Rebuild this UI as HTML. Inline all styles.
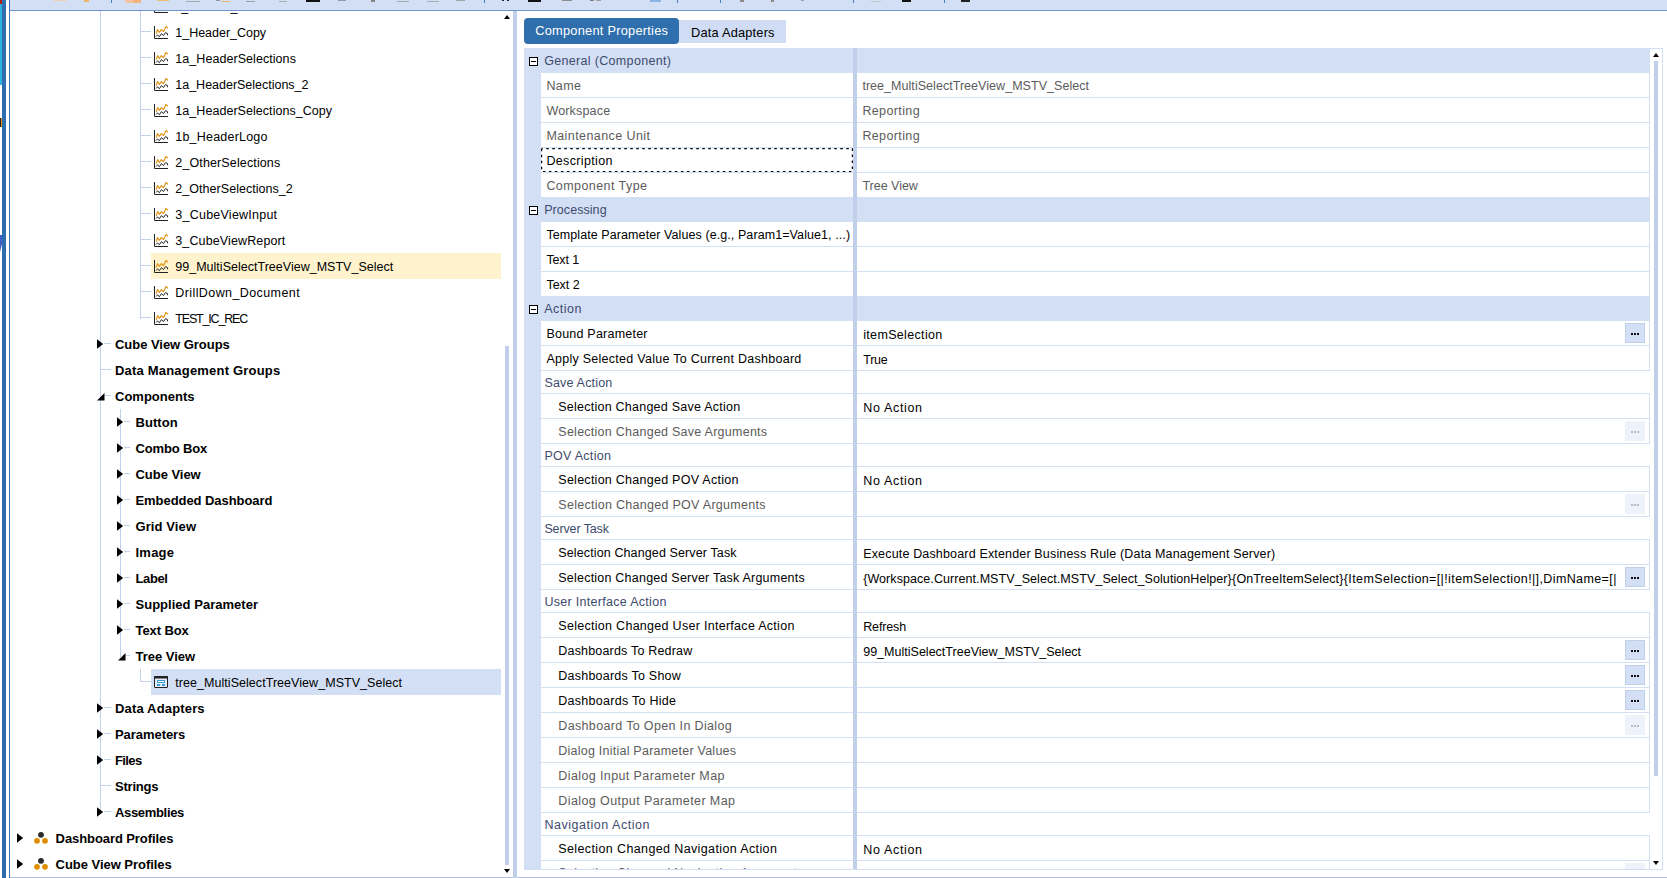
<!DOCTYPE html>
<html lang="en"><head><meta charset="utf-8"><title>Component Properties</title>
<style>
html,body{margin:0;padding:0;background:#fff;}
body{width:1667px;height:878px;overflow:hidden;position:relative;font-family:"Liberation Sans", sans-serif;}
div,svg,span.t{position:absolute;}
span.t{white-space:pre;line-height:20px;height:20px;}
#grid{left:524px;top:48px;width:1139px;height:822px;overflow:hidden;}
</style></head><body>
<div style="left:0px;top:0px;width:2px;height:4px;background:#b01c14;"></div>
<div style="left:0px;top:4px;width:2px;height:81px;background:#2fb1e0;"></div>
<div style="left:2px;top:0px;width:4px;height:878px;background:#2e6dae;"></div>
<div style="left:0px;top:118px;width:1px;height:9px;background:#222;"></div>
<div style="left:1px;top:118px;width:1px;height:9px;background:#e08e0b;"></div>
<div style="left:0px;top:235px;width:2px;height:17px;background:#4060c8;clip-path:polygon(0 0,100% 0,100% 53%,0 100%);"></div>
<div style="left:9px;top:0px;width:1px;height:878px;background:#3a72b0;"></div>
<div style="left:10px;top:0px;width:1657px;height:10px;background:#d3dff5;"></div>
<div style="left:10px;top:10px;width:1657px;height:1px;background:#7094cf;"></div>
<div style="left:10px;top:877px;width:1657px;height:1px;background:#b4c1dd;"></div>
<div style="left:54px;top:0px;width:5px;height:1px;background:#ecd0a8;"></div>
<div style="left:60px;top:0px;width:6px;height:1px;background:#ecd0a8;"></div>
<div style="left:84px;top:0px;width:5px;height:1.5px;background:#f0b468;"></div>
<div style="left:111px;top:0px;width:1px;height:2.5px;background:#4a7ac0;"></div>
<div style="left:125px;top:0px;width:8px;height:2.5px;background:#f3c4a4;"></div>
<div style="left:133px;top:0px;width:8px;height:2.5px;background:#f3b47c;"></div>
<div style="left:157px;top:0px;width:12px;height:1px;background:#efbc78;"></div>
<div style="left:186px;top:1px;width:14px;height:1px;background:#a4a8b0;"></div>
<div style="left:216px;top:0px;width:4px;height:1px;background:#9098a4;"></div>
<div style="left:221px;top:1px;width:9px;height:1px;background:#ecb870;"></div>
<div style="left:246px;top:1px;width:9px;height:1px;background:#9a9ea8;"></div>
<div style="left:279px;top:1px;width:8px;height:1px;background:#a4a8b0;"></div>
<div style="left:306px;top:0px;width:14px;height:1.6px;background:#111;"></div>
<div style="left:338px;top:0px;width:8px;height:1px;background:#8e9cb4;"></div>
<div style="left:371px;top:0px;width:4px;height:1.6px;background:#858585;"></div>
<div style="left:397px;top:1px;width:12px;height:1px;background:#a4a8b0;"></div>
<div style="left:427px;top:1px;width:12px;height:1px;background:#a4a8b0;"></div>
<div style="left:456px;top:0px;width:9px;height:1px;background:#a0a4ac;"></div>
<div style="left:484px;top:0px;width:1px;height:2.5px;background:#4a7ac0;"></div>
<div style="left:502px;top:0px;width:2px;height:1px;background:#222;"></div>
<div style="left:507px;top:0px;width:2px;height:1px;background:#222;"></div>
<div style="left:528px;top:0px;width:13px;height:1.6px;background:#111;"></div>
<div style="left:562px;top:0px;width:10px;height:1px;background:#8c8c8c;"></div>
<div style="left:590px;top:0px;width:4px;height:1px;background:#808080;"></div>
<div style="left:596px;top:0px;width:5px;height:1px;background:#a0a0a0;"></div>
<div style="left:650px;top:0px;width:11px;height:1.6px;background:#8ab4e8;"></div>
<div style="left:677px;top:0px;width:1px;height:2.5px;background:#4a7ac0;"></div>
<div style="left:720px;top:0px;width:1px;height:2.5px;background:#4a7ac0;"></div>
<div style="left:740px;top:0px;width:4px;height:1.6px;background:#8c8c8c;"></div>
<div style="left:771px;top:0px;width:3px;height:1.6px;background:#8c8c8c;"></div>
<div style="left:801px;top:0px;width:3px;height:1px;background:#a0a0a0;"></div>
<div style="left:853px;top:0px;width:1px;height:2.5px;background:#4a7ac0;"></div>
<div style="left:871px;top:1px;width:10px;height:1px;background:#c4c8d0;"></div>
<div style="left:902px;top:0px;width:9px;height:1.6px;background:#111;"></div>
<div style="left:944px;top:0px;width:1px;height:2.5px;background:#4a7ac0;"></div>
<div style="left:961px;top:0px;width:9px;height:1.6px;background:#222;"></div>
<div style="left:513px;top:11px;width:4px;height:867px;background:#c0cfea;"></div>
<div style="left:504px;top:15px;width:0;height:0;border-left:3px solid transparent;border-right:3px solid transparent;border-bottom:4px solid #000"></div>
<div style="left:504px;top:869px;width:0;height:0;border-left:3px solid transparent;border-right:3px solid transparent;border-top:4px solid #000"></div>
<div style="left:505px;top:346px;width:4px;height:519px;background:#c0cfea;"></div>
<div style="left:100px;top:11px;width:1px;height:802px;background:#c3d1ec;"></div>
<div style="left:140px;top:11px;width:1px;height:308px;background:#c3d1ec;"></div>
<div style="left:120px;top:409px;width:1px;height:248px;background:#c3d1ec;"></div>
<div style="left:140px;top:669px;width:1px;height:13px;background:#c3d1ec;"></div>
<div style="left:151px;top:253px;width:350px;height:25.5px;background:#fff3cd;"></div>
<div style="left:151px;top:669px;width:350px;height:26px;background:#d3dff5;"></div>
<div style="left:141px;top:31px;width:10px;height:1px;background:#c3d1ec;"></div>
<svg style="left:154px;top:26px" width="15" height="14" viewBox="0 0 15 14"><path d="M0.5 0V12.5H14" fill="none" stroke="#222" stroke-width="1"/><path d="M2.4 7.4L3.5 3.6L5.4 6.4L7.4 3.6L9.5 5.7L12 0.4L13.6 1.8" fill="none" stroke="#e08e0b" stroke-width="1.1" stroke-linejoin="round" stroke-linecap="round"/><path d="M2.4 10.2L3.5 8.9L5.4 10.7L7.4 7.7L9.5 9.5L11.5 6.6L13.4 7.5L13.6 8.9" fill="none" stroke="#222" stroke-width="1" stroke-linejoin="round" stroke-linecap="round"/></svg>
<div style="left:141px;top:57px;width:10px;height:1px;background:#c3d1ec;"></div>
<svg style="left:154px;top:52px" width="15" height="14" viewBox="0 0 15 14"><path d="M0.5 0V12.5H14" fill="none" stroke="#222" stroke-width="1"/><path d="M2.4 7.4L3.5 3.6L5.4 6.4L7.4 3.6L9.5 5.7L12 0.4L13.6 1.8" fill="none" stroke="#e08e0b" stroke-width="1.1" stroke-linejoin="round" stroke-linecap="round"/><path d="M2.4 10.2L3.5 8.9L5.4 10.7L7.4 7.7L9.5 9.5L11.5 6.6L13.4 7.5L13.6 8.9" fill="none" stroke="#222" stroke-width="1" stroke-linejoin="round" stroke-linecap="round"/></svg>
<div style="left:141px;top:83px;width:10px;height:1px;background:#c3d1ec;"></div>
<svg style="left:154px;top:78px" width="15" height="14" viewBox="0 0 15 14"><path d="M0.5 0V12.5H14" fill="none" stroke="#222" stroke-width="1"/><path d="M2.4 7.4L3.5 3.6L5.4 6.4L7.4 3.6L9.5 5.7L12 0.4L13.6 1.8" fill="none" stroke="#e08e0b" stroke-width="1.1" stroke-linejoin="round" stroke-linecap="round"/><path d="M2.4 10.2L3.5 8.9L5.4 10.7L7.4 7.7L9.5 9.5L11.5 6.6L13.4 7.5L13.6 8.9" fill="none" stroke="#222" stroke-width="1" stroke-linejoin="round" stroke-linecap="round"/></svg>
<div style="left:141px;top:109px;width:10px;height:1px;background:#c3d1ec;"></div>
<svg style="left:154px;top:104px" width="15" height="14" viewBox="0 0 15 14"><path d="M0.5 0V12.5H14" fill="none" stroke="#222" stroke-width="1"/><path d="M2.4 7.4L3.5 3.6L5.4 6.4L7.4 3.6L9.5 5.7L12 0.4L13.6 1.8" fill="none" stroke="#e08e0b" stroke-width="1.1" stroke-linejoin="round" stroke-linecap="round"/><path d="M2.4 10.2L3.5 8.9L5.4 10.7L7.4 7.7L9.5 9.5L11.5 6.6L13.4 7.5L13.6 8.9" fill="none" stroke="#222" stroke-width="1" stroke-linejoin="round" stroke-linecap="round"/></svg>
<div style="left:141px;top:135px;width:10px;height:1px;background:#c3d1ec;"></div>
<svg style="left:154px;top:130px" width="15" height="14" viewBox="0 0 15 14"><path d="M0.5 0V12.5H14" fill="none" stroke="#222" stroke-width="1"/><path d="M2.4 7.4L3.5 3.6L5.4 6.4L7.4 3.6L9.5 5.7L12 0.4L13.6 1.8" fill="none" stroke="#e08e0b" stroke-width="1.1" stroke-linejoin="round" stroke-linecap="round"/><path d="M2.4 10.2L3.5 8.9L5.4 10.7L7.4 7.7L9.5 9.5L11.5 6.6L13.4 7.5L13.6 8.9" fill="none" stroke="#222" stroke-width="1" stroke-linejoin="round" stroke-linecap="round"/></svg>
<div style="left:141px;top:161px;width:10px;height:1px;background:#c3d1ec;"></div>
<svg style="left:154px;top:156px" width="15" height="14" viewBox="0 0 15 14"><path d="M0.5 0V12.5H14" fill="none" stroke="#222" stroke-width="1"/><path d="M2.4 7.4L3.5 3.6L5.4 6.4L7.4 3.6L9.5 5.7L12 0.4L13.6 1.8" fill="none" stroke="#e08e0b" stroke-width="1.1" stroke-linejoin="round" stroke-linecap="round"/><path d="M2.4 10.2L3.5 8.9L5.4 10.7L7.4 7.7L9.5 9.5L11.5 6.6L13.4 7.5L13.6 8.9" fill="none" stroke="#222" stroke-width="1" stroke-linejoin="round" stroke-linecap="round"/></svg>
<div style="left:141px;top:187px;width:10px;height:1px;background:#c3d1ec;"></div>
<svg style="left:154px;top:182px" width="15" height="14" viewBox="0 0 15 14"><path d="M0.5 0V12.5H14" fill="none" stroke="#222" stroke-width="1"/><path d="M2.4 7.4L3.5 3.6L5.4 6.4L7.4 3.6L9.5 5.7L12 0.4L13.6 1.8" fill="none" stroke="#e08e0b" stroke-width="1.1" stroke-linejoin="round" stroke-linecap="round"/><path d="M2.4 10.2L3.5 8.9L5.4 10.7L7.4 7.7L9.5 9.5L11.5 6.6L13.4 7.5L13.6 8.9" fill="none" stroke="#222" stroke-width="1" stroke-linejoin="round" stroke-linecap="round"/></svg>
<div style="left:141px;top:213px;width:10px;height:1px;background:#c3d1ec;"></div>
<svg style="left:154px;top:208px" width="15" height="14" viewBox="0 0 15 14"><path d="M0.5 0V12.5H14" fill="none" stroke="#222" stroke-width="1"/><path d="M2.4 7.4L3.5 3.6L5.4 6.4L7.4 3.6L9.5 5.7L12 0.4L13.6 1.8" fill="none" stroke="#e08e0b" stroke-width="1.1" stroke-linejoin="round" stroke-linecap="round"/><path d="M2.4 10.2L3.5 8.9L5.4 10.7L7.4 7.7L9.5 9.5L11.5 6.6L13.4 7.5L13.6 8.9" fill="none" stroke="#222" stroke-width="1" stroke-linejoin="round" stroke-linecap="round"/></svg>
<div style="left:141px;top:239px;width:10px;height:1px;background:#c3d1ec;"></div>
<svg style="left:154px;top:234px" width="15" height="14" viewBox="0 0 15 14"><path d="M0.5 0V12.5H14" fill="none" stroke="#222" stroke-width="1"/><path d="M2.4 7.4L3.5 3.6L5.4 6.4L7.4 3.6L9.5 5.7L12 0.4L13.6 1.8" fill="none" stroke="#e08e0b" stroke-width="1.1" stroke-linejoin="round" stroke-linecap="round"/><path d="M2.4 10.2L3.5 8.9L5.4 10.7L7.4 7.7L9.5 9.5L11.5 6.6L13.4 7.5L13.6 8.9" fill="none" stroke="#222" stroke-width="1" stroke-linejoin="round" stroke-linecap="round"/></svg>
<div style="left:141px;top:265px;width:10px;height:1px;background:#c3d1ec;"></div>
<svg style="left:154px;top:260px" width="15" height="14" viewBox="0 0 15 14"><path d="M0.5 0V12.5H14" fill="none" stroke="#222" stroke-width="1"/><path d="M2.4 7.4L3.5 3.6L5.4 6.4L7.4 3.6L9.5 5.7L12 0.4L13.6 1.8" fill="none" stroke="#e08e0b" stroke-width="1.1" stroke-linejoin="round" stroke-linecap="round"/><path d="M2.4 10.2L3.5 8.9L5.4 10.7L7.4 7.7L9.5 9.5L11.5 6.6L13.4 7.5L13.6 8.9" fill="none" stroke="#222" stroke-width="1" stroke-linejoin="round" stroke-linecap="round"/></svg>
<div style="left:141px;top:291px;width:10px;height:1px;background:#c3d1ec;"></div>
<svg style="left:154px;top:286px" width="15" height="14" viewBox="0 0 15 14"><path d="M0.5 0V12.5H14" fill="none" stroke="#222" stroke-width="1"/><path d="M2.4 7.4L3.5 3.6L5.4 6.4L7.4 3.6L9.5 5.7L12 0.4L13.6 1.8" fill="none" stroke="#e08e0b" stroke-width="1.1" stroke-linejoin="round" stroke-linecap="round"/><path d="M2.4 10.2L3.5 8.9L5.4 10.7L7.4 7.7L9.5 9.5L11.5 6.6L13.4 7.5L13.6 8.9" fill="none" stroke="#222" stroke-width="1" stroke-linejoin="round" stroke-linecap="round"/></svg>
<div style="left:141px;top:317px;width:10px;height:1px;background:#c3d1ec;"></div>
<svg style="left:154px;top:312px" width="15" height="14" viewBox="0 0 15 14"><path d="M0.5 0V12.5H14" fill="none" stroke="#222" stroke-width="1"/><path d="M2.4 7.4L3.5 3.6L5.4 6.4L7.4 3.6L9.5 5.7L12 0.4L13.6 1.8" fill="none" stroke="#e08e0b" stroke-width="1.1" stroke-linejoin="round" stroke-linecap="round"/><path d="M2.4 10.2L3.5 8.9L5.4 10.7L7.4 7.7L9.5 9.5L11.5 6.6L13.4 7.5L13.6 8.9" fill="none" stroke="#222" stroke-width="1" stroke-linejoin="round" stroke-linecap="round"/></svg>
<svg style="clip-path:inset(11px 0 0 0);left:154px;top:0px" width="15" height="14" viewBox="0 0 15 14"><path d="M0.5 0V12.5H14" fill="none" stroke="#222" stroke-width="1"/><path d="M2.4 7.4L3.5 3.6L5.4 6.4L7.4 3.6L9.5 5.7L12 0.4L13.6 1.8" fill="none" stroke="#e08e0b" stroke-width="1.1" stroke-linejoin="round" stroke-linecap="round"/><path d="M2.4 10.2L3.5 8.9L5.4 10.7L7.4 7.7L9.5 9.5L11.5 6.6L13.4 7.5L13.6 8.9" fill="none" stroke="#222" stroke-width="1" stroke-linejoin="round" stroke-linecap="round"/></svg>
<div style="left:141px;top:5px;width:10px;height:1px;background:#c3d1ec;display:none;"></div>
<svg style="left:97px;top:338px" width="7" height="12" viewBox="0 0 7 12"><path d="M0 1.2L6.2 6L0 10.8Z" fill="#000"/></svg>
<div style="left:104px;top:343px;width:7px;height:1px;background:#c3d1ec;"></div>
<div style="left:101px;top:369px;width:10px;height:1px;background:#c3d1ec;"></div>
<svg style="left:97px;top:393px" width="8" height="8" viewBox="0 0 8 8"><path d="M7.5 0V7.5H0Z" fill="#000"/></svg>
<div style="left:105px;top:395px;width:6px;height:1px;background:#c3d1ec;"></div>
<svg style="left:97px;top:702px" width="7" height="12" viewBox="0 0 7 12"><path d="M0 1.2L6.2 6L0 10.8Z" fill="#000"/></svg>
<div style="left:104px;top:707px;width:7px;height:1px;background:#c3d1ec;"></div>
<svg style="left:97px;top:728px" width="7" height="12" viewBox="0 0 7 12"><path d="M0 1.2L6.2 6L0 10.8Z" fill="#000"/></svg>
<div style="left:104px;top:733px;width:7px;height:1px;background:#c3d1ec;"></div>
<svg style="left:97px;top:754px" width="7" height="12" viewBox="0 0 7 12"><path d="M0 1.2L6.2 6L0 10.8Z" fill="#000"/></svg>
<div style="left:104px;top:759px;width:7px;height:1px;background:#c3d1ec;"></div>
<div style="left:101px;top:785px;width:10px;height:1px;background:#c3d1ec;"></div>
<svg style="left:97px;top:806px" width="7" height="12" viewBox="0 0 7 12"><path d="M0 1.2L6.2 6L0 10.8Z" fill="#000"/></svg>
<div style="left:104px;top:811px;width:7px;height:1px;background:#c3d1ec;"></div>
<svg style="left:117px;top:416px" width="7" height="12" viewBox="0 0 7 12"><path d="M0 1.2L6.2 6L0 10.8Z" fill="#000"/></svg>
<div style="left:124px;top:421px;width:6px;height:1px;background:#c3d1ec;"></div>
<svg style="left:117px;top:442px" width="7" height="12" viewBox="0 0 7 12"><path d="M0 1.2L6.2 6L0 10.8Z" fill="#000"/></svg>
<div style="left:124px;top:447px;width:6px;height:1px;background:#c3d1ec;"></div>
<svg style="left:117px;top:468px" width="7" height="12" viewBox="0 0 7 12"><path d="M0 1.2L6.2 6L0 10.8Z" fill="#000"/></svg>
<div style="left:124px;top:473px;width:6px;height:1px;background:#c3d1ec;"></div>
<svg style="left:117px;top:494px" width="7" height="12" viewBox="0 0 7 12"><path d="M0 1.2L6.2 6L0 10.8Z" fill="#000"/></svg>
<div style="left:124px;top:499px;width:6px;height:1px;background:#c3d1ec;"></div>
<svg style="left:117px;top:520px" width="7" height="12" viewBox="0 0 7 12"><path d="M0 1.2L6.2 6L0 10.8Z" fill="#000"/></svg>
<div style="left:124px;top:525px;width:6px;height:1px;background:#c3d1ec;"></div>
<svg style="left:117px;top:546px" width="7" height="12" viewBox="0 0 7 12"><path d="M0 1.2L6.2 6L0 10.8Z" fill="#000"/></svg>
<div style="left:124px;top:551px;width:6px;height:1px;background:#c3d1ec;"></div>
<svg style="left:117px;top:572px" width="7" height="12" viewBox="0 0 7 12"><path d="M0 1.2L6.2 6L0 10.8Z" fill="#000"/></svg>
<div style="left:124px;top:577px;width:6px;height:1px;background:#c3d1ec;"></div>
<svg style="left:117px;top:598px" width="7" height="12" viewBox="0 0 7 12"><path d="M0 1.2L6.2 6L0 10.8Z" fill="#000"/></svg>
<div style="left:124px;top:603px;width:6px;height:1px;background:#c3d1ec;"></div>
<svg style="left:117px;top:624px" width="7" height="12" viewBox="0 0 7 12"><path d="M0 1.2L6.2 6L0 10.8Z" fill="#000"/></svg>
<div style="left:124px;top:629px;width:6px;height:1px;background:#c3d1ec;"></div>
<svg style="left:118px;top:653px" width="8" height="8" viewBox="0 0 8 8"><path d="M7.5 0V7.5H0Z" fill="#000"/></svg>
<div style="left:126px;top:655px;width:4px;height:1px;background:#c3d1ec;"></div>
<div style="left:141px;top:681px;width:10px;height:1px;background:#c3d1ec;"></div>
<svg style="left:154px;top:676px" width="14" height="12" viewBox="0 0 14 12"><rect x="0.5" y="0.5" width="13" height="11" rx="0.5" fill="#e6ecfa" stroke="#222"/><rect x="0" y="0" width="14" height="2.6" rx="0.5" fill="#222"/><rect x="3.5" y="4.5" width="7" height="2" fill="#fff" stroke="#3d9bd5"/><rect x="3" y="8" width="3" height="2" fill="#3d9bd5"/><rect x="8" y="8" width="3" height="2" fill="#3d9bd5"/></svg>
<svg style="left:17px;top:832px" width="7" height="12" viewBox="0 0 7 12"><path d="M0 1.2L6.2 6L0 10.8Z" fill="#000"/></svg>
<svg style="left:33px;top:831px" width="16" height="14" viewBox="0 0 16 14"><circle cx="8" cy="3.8" r="2.9" fill="#2b2b2b"/><circle cx="4" cy="9.8" r="2.9" fill="#e08e00"/><circle cx="12" cy="9.8" r="2.9" fill="#e08e00"/></svg>
<svg style="left:17px;top:858px" width="7" height="12" viewBox="0 0 7 12"><path d="M0 1.2L6.2 6L0 10.8Z" fill="#000"/></svg>
<svg style="left:33px;top:857px" width="16" height="14" viewBox="0 0 16 14"><circle cx="8" cy="3.8" r="2.9" fill="#2b2b2b"/><circle cx="4" cy="9.8" r="2.9" fill="#e08e00"/><circle cx="12" cy="9.8" r="2.9" fill="#e08e00"/></svg>
<div style="left:524px;top:18px;width:155px;height:26px;background:#2f6fad;border-radius:4px;"></div>
<div style="left:679px;top:20px;width:107px;height:23px;background:#cfdcf3;"></div>
<span class="t" style="left:175.30px;top:23.00px;font-size:12.5px;color:#000;letter-spacing:-0.021px;">1_Header_Copy</span>
<span class="t" style="left:175.30px;top:49.00px;font-size:12.5px;color:#000;letter-spacing:0.059px;">1a_HeaderSelections</span>
<span class="t" style="left:175.30px;top:75.00px;font-size:12.5px;color:#000;letter-spacing:-0.012px;">1a_HeaderSelections_2</span>
<span class="t" style="left:175.30px;top:101.00px;font-size:12.5px;color:#000;letter-spacing:0.049px;">1a_HeaderSelections_Copy</span>
<span class="t" style="left:175.30px;top:127.00px;font-size:12.5px;color:#000;letter-spacing:0.211px;">1b_HeaderLogo</span>
<span class="t" style="left:175.30px;top:153.00px;font-size:12.5px;color:#000;letter-spacing:0.129px;">2_OtherSelections</span>
<span class="t" style="left:175.30px;top:179.00px;font-size:12.5px;color:#000;letter-spacing:0.042px;">2_OtherSelections_2</span>
<span class="t" style="left:175.30px;top:205.00px;font-size:12.5px;color:#000;letter-spacing:0.238px;">3_CubeViewInput</span>
<span class="t" style="left:175.30px;top:231.00px;font-size:12.5px;color:#000;letter-spacing:0.121px;">3_CubeViewReport</span>
<span class="t" style="left:175.30px;top:257.00px;font-size:12.5px;color:#000;letter-spacing:0.013px;">99_MultiSelectTreeView_MSTV_Select</span>
<span class="t" style="left:175.30px;top:283.00px;font-size:12.5px;color:#000;letter-spacing:0.406px;">DrillDown_Document</span>
<span class="t" style="left:175.30px;top:309.00px;font-size:12.5px;color:#000;letter-spacing:-1.185px;">TEST_IC_REC</span>
<span class="t" style="left:181.30px;top:-2.60px;font-size:12.5px;color:#000;letter-spacing:0.000px;">_</span>
<span class="t" style="left:230.60px;top:-2.60px;font-size:12.5px;color:#000;letter-spacing:0.000px;">_</span>
<span class="t" style="left:115.00px;top:334.00px;font-size:13px;color:#000;letter-spacing:-0.036px;line-height:21px;height:21px;font-weight:bold;">Cube View Groups</span>
<span class="t" style="left:115.00px;top:360.00px;font-size:13px;color:#000;letter-spacing:0.196px;line-height:21px;height:21px;font-weight:bold;">Data Management Groups</span>
<span class="t" style="left:115.00px;top:386.00px;font-size:13px;color:#000;letter-spacing:0.005px;line-height:21px;height:21px;font-weight:bold;">Components</span>
<span class="t" style="left:115.00px;top:698.00px;font-size:13px;color:#000;letter-spacing:0.162px;line-height:21px;height:21px;font-weight:bold;">Data Adapters</span>
<span class="t" style="left:115.00px;top:724.00px;font-size:13px;color:#000;letter-spacing:-0.059px;line-height:21px;height:21px;font-weight:bold;">Parameters</span>
<span class="t" style="left:115.00px;top:750.00px;font-size:13px;color:#000;letter-spacing:-0.606px;line-height:21px;height:21px;font-weight:bold;">Files</span>
<span class="t" style="left:115.00px;top:776.00px;font-size:13px;color:#000;letter-spacing:-0.216px;line-height:21px;height:21px;font-weight:bold;">Strings</span>
<span class="t" style="left:115.00px;top:802.00px;font-size:13px;color:#000;letter-spacing:-0.330px;line-height:21px;height:21px;font-weight:bold;">Assemblies</span>
<span class="t" style="left:135.50px;top:412.00px;font-size:13px;color:#000;letter-spacing:0.065px;line-height:21px;height:21px;font-weight:bold;">Button</span>
<span class="t" style="left:135.50px;top:438.00px;font-size:13px;color:#000;letter-spacing:-0.157px;line-height:21px;height:21px;font-weight:bold;">Combo Box</span>
<span class="t" style="left:135.50px;top:464.00px;font-size:13px;color:#000;letter-spacing:-0.039px;line-height:21px;height:21px;font-weight:bold;">Cube View</span>
<span class="t" style="left:135.50px;top:490.00px;font-size:13px;color:#000;letter-spacing:-0.063px;line-height:21px;height:21px;font-weight:bold;">Embedded Dashboard</span>
<span class="t" style="left:135.50px;top:516.00px;font-size:13px;color:#000;letter-spacing:0.096px;line-height:21px;height:21px;font-weight:bold;">Grid View</span>
<span class="t" style="left:135.50px;top:542.00px;font-size:13px;color:#000;letter-spacing:0.230px;line-height:21px;height:21px;font-weight:bold;">Image</span>
<span class="t" style="left:135.50px;top:568.00px;font-size:13px;color:#000;letter-spacing:-0.392px;line-height:21px;height:21px;font-weight:bold;">Label</span>
<span class="t" style="left:135.50px;top:594.00px;font-size:13px;color:#000;letter-spacing:0.023px;line-height:21px;height:21px;font-weight:bold;">Supplied Parameter</span>
<span class="t" style="left:135.50px;top:620.00px;font-size:13px;color:#000;letter-spacing:-0.091px;line-height:21px;height:21px;font-weight:bold;">Text Box</span>
<span class="t" style="left:135.50px;top:646.00px;font-size:13px;color:#000;letter-spacing:-0.019px;line-height:21px;height:21px;font-weight:bold;">Tree View</span>
<span class="t" style="left:175.30px;top:673.00px;font-size:12.5px;color:#000;letter-spacing:0.048px;">tree_MultiSelectTreeView_MSTV_Select</span>
<span class="t" style="left:55.60px;top:828.00px;font-size:13px;color:#000;letter-spacing:-0.083px;line-height:21px;height:21px;font-weight:bold;">Dashboard Profiles</span>
<span class="t" style="left:55.60px;top:854.00px;font-size:13px;color:#000;letter-spacing:-0.035px;line-height:21px;height:21px;font-weight:bold;">Cube View Profiles</span>
<span class="t" style="left:535.20px;top:20.30px;font-size:12.8px;color:#fff;letter-spacing:0.250px;line-height:21px;height:21px;">Component Properties</span>
<span class="t" style="left:691.10px;top:22.00px;font-size:12.8px;color:#000;letter-spacing:0.191px;line-height:21px;height:21px;">Data Adapters</span>
<div id="grid">
<div style="left:0px;top:0px;width:1139px;height:832px;background:#d3dff5;"></div>
<div style="left:0px;top:0px;width:1139px;height:25px;background:#d3dff5;"></div>
<div style="left:5px;top:9px;width:9px;height:9px;background:#fff;box-sizing:border-box;border:1px solid #000;"></div>
<div style="left:7px;top:13px;width:5px;height:1px;background:#000;"></div>
<div style="left:17px;top:25px;width:312px;height:24px;background:#fff;"></div>
<div style="left:333px;top:25px;width:792px;height:24px;background:#fff;"></div>
<div style="left:1125px;top:25px;width:1px;height:25px;background:#d3dff5;"></div>
<div style="left:17px;top:50px;width:312px;height:24px;background:#fff;"></div>
<div style="left:333px;top:50px;width:792px;height:24px;background:#fff;"></div>
<div style="left:1125px;top:50px;width:1px;height:25px;background:#d3dff5;"></div>
<div style="left:17px;top:75px;width:312px;height:24px;background:#fff;"></div>
<div style="left:333px;top:75px;width:792px;height:24px;background:#fff;"></div>
<div style="left:1125px;top:75px;width:1px;height:25px;background:#d3dff5;"></div>
<div style="left:17px;top:100px;width:312px;height:24px;background:#fff;"></div>
<div style="left:333px;top:100px;width:792px;height:24px;background:#fff;"></div>
<div style="left:1125px;top:100px;width:1px;height:25px;background:#d3dff5;"></div>
<div style="left:17px;top:125px;width:312px;height:24px;background:#fff;"></div>
<div style="left:333px;top:125px;width:792px;height:24px;background:#fff;"></div>
<div style="left:1125px;top:125px;width:1px;height:25px;background:#d3dff5;"></div>
<div style="left:0px;top:149px;width:1139px;height:26px;background:#d3dff5;"></div>
<div style="left:5px;top:158px;width:9px;height:9px;background:#fff;box-sizing:border-box;border:1px solid #000;"></div>
<div style="left:7px;top:162px;width:5px;height:1px;background:#000;"></div>
<div style="left:17px;top:174px;width:312px;height:24px;background:#fff;"></div>
<div style="left:333px;top:174px;width:792px;height:24px;background:#fff;"></div>
<div style="left:1125px;top:174px;width:1px;height:25px;background:#d3dff5;"></div>
<div style="left:17px;top:199px;width:312px;height:24px;background:#fff;"></div>
<div style="left:333px;top:199px;width:792px;height:24px;background:#fff;"></div>
<div style="left:1125px;top:199px;width:1px;height:25px;background:#d3dff5;"></div>
<div style="left:17px;top:224px;width:312px;height:24px;background:#fff;"></div>
<div style="left:333px;top:224px;width:792px;height:24px;background:#fff;"></div>
<div style="left:1125px;top:224px;width:1px;height:25px;background:#d3dff5;"></div>
<div style="left:0px;top:248px;width:1139px;height:26px;background:#d3dff5;"></div>
<div style="left:5px;top:257px;width:9px;height:9px;background:#fff;box-sizing:border-box;border:1px solid #000;"></div>
<div style="left:7px;top:261px;width:5px;height:1px;background:#000;"></div>
<div style="left:17px;top:273px;width:312px;height:24px;background:#fff;"></div>
<div style="left:333px;top:273px;width:792px;height:24px;background:#fff;"></div>
<div style="left:1125px;top:273px;width:1px;height:25px;background:#d3dff5;"></div>
<div style="left:1101px;top:275px;width:20px;height:20px;background:#d3dff5;box-sizing:border-box;border:1px solid #c0cfea;"></div>
<div style="left:1107px;top:285px;width:2px;height:2px;background:#111;"></div>
<div style="left:1110px;top:285px;width:2px;height:2px;background:#111;"></div>
<div style="left:1113px;top:285px;width:2px;height:2px;background:#111;"></div>
<div style="left:17px;top:298px;width:312px;height:24px;background:#fff;"></div>
<div style="left:333px;top:298px;width:792px;height:24px;background:#fff;"></div>
<div style="left:1125px;top:298px;width:1px;height:25px;background:#d3dff5;"></div>
<div style="left:17px;top:323px;width:312px;height:22px;background:#fff;"></div>
<div style="left:333px;top:323px;width:793px;height:22px;background:#fff;"></div>
<div style="left:17px;top:346px;width:312px;height:24px;background:#fff;"></div>
<div style="left:333px;top:346px;width:792px;height:24px;background:#fff;"></div>
<div style="left:1125px;top:346px;width:1px;height:25px;background:#d3dff5;"></div>
<div style="left:17px;top:371px;width:312px;height:24px;background:#fff;"></div>
<div style="left:333px;top:371px;width:792px;height:24px;background:#fff;"></div>
<div style="left:1125px;top:371px;width:1px;height:25px;background:#d3dff5;"></div>
<div style="left:1101px;top:373px;width:20px;height:20px;background:#eef2fb;"></div>
<div style="left:1107px;top:383px;width:2px;height:2px;background:#b9bcc4;"></div>
<div style="left:1110px;top:383px;width:2px;height:2px;background:#b9bcc4;"></div>
<div style="left:1113px;top:383px;width:2px;height:2px;background:#b9bcc4;"></div>
<div style="left:17px;top:396px;width:312px;height:22px;background:#fff;"></div>
<div style="left:333px;top:396px;width:793px;height:22px;background:#fff;"></div>
<div style="left:17px;top:419px;width:312px;height:24px;background:#fff;"></div>
<div style="left:333px;top:419px;width:792px;height:24px;background:#fff;"></div>
<div style="left:1125px;top:419px;width:1px;height:25px;background:#d3dff5;"></div>
<div style="left:17px;top:444px;width:312px;height:24px;background:#fff;"></div>
<div style="left:333px;top:444px;width:792px;height:24px;background:#fff;"></div>
<div style="left:1125px;top:444px;width:1px;height:25px;background:#d3dff5;"></div>
<div style="left:1101px;top:446px;width:20px;height:20px;background:#eef2fb;"></div>
<div style="left:1107px;top:456px;width:2px;height:2px;background:#b9bcc4;"></div>
<div style="left:1110px;top:456px;width:2px;height:2px;background:#b9bcc4;"></div>
<div style="left:1113px;top:456px;width:2px;height:2px;background:#b9bcc4;"></div>
<div style="left:17px;top:469px;width:312px;height:22px;background:#fff;"></div>
<div style="left:333px;top:469px;width:793px;height:22px;background:#fff;"></div>
<div style="left:17px;top:492px;width:312px;height:24px;background:#fff;"></div>
<div style="left:333px;top:492px;width:792px;height:24px;background:#fff;"></div>
<div style="left:1125px;top:492px;width:1px;height:25px;background:#d3dff5;"></div>
<div style="left:17px;top:517px;width:312px;height:24px;background:#fff;"></div>
<div style="left:333px;top:517px;width:792px;height:24px;background:#fff;"></div>
<div style="left:1125px;top:517px;width:1px;height:25px;background:#d3dff5;"></div>
<div style="left:1101px;top:519px;width:20px;height:20px;background:#d3dff5;box-sizing:border-box;border:1px solid #c0cfea;"></div>
<div style="left:1107px;top:529px;width:2px;height:2px;background:#111;"></div>
<div style="left:1110px;top:529px;width:2px;height:2px;background:#111;"></div>
<div style="left:1113px;top:529px;width:2px;height:2px;background:#111;"></div>
<div style="left:17px;top:542px;width:312px;height:22px;background:#fff;"></div>
<div style="left:333px;top:542px;width:793px;height:22px;background:#fff;"></div>
<div style="left:17px;top:565px;width:312px;height:24px;background:#fff;"></div>
<div style="left:333px;top:565px;width:792px;height:24px;background:#fff;"></div>
<div style="left:1125px;top:565px;width:1px;height:25px;background:#d3dff5;"></div>
<div style="left:17px;top:590px;width:312px;height:24px;background:#fff;"></div>
<div style="left:333px;top:590px;width:792px;height:24px;background:#fff;"></div>
<div style="left:1125px;top:590px;width:1px;height:25px;background:#d3dff5;"></div>
<div style="left:1101px;top:592px;width:20px;height:20px;background:#d3dff5;box-sizing:border-box;border:1px solid #c0cfea;"></div>
<div style="left:1107px;top:602px;width:2px;height:2px;background:#111;"></div>
<div style="left:1110px;top:602px;width:2px;height:2px;background:#111;"></div>
<div style="left:1113px;top:602px;width:2px;height:2px;background:#111;"></div>
<div style="left:17px;top:615px;width:312px;height:24px;background:#fff;"></div>
<div style="left:333px;top:615px;width:792px;height:24px;background:#fff;"></div>
<div style="left:1125px;top:615px;width:1px;height:25px;background:#d3dff5;"></div>
<div style="left:1101px;top:617px;width:20px;height:20px;background:#d3dff5;box-sizing:border-box;border:1px solid #c0cfea;"></div>
<div style="left:1107px;top:627px;width:2px;height:2px;background:#111;"></div>
<div style="left:1110px;top:627px;width:2px;height:2px;background:#111;"></div>
<div style="left:1113px;top:627px;width:2px;height:2px;background:#111;"></div>
<div style="left:17px;top:640px;width:312px;height:24px;background:#fff;"></div>
<div style="left:333px;top:640px;width:792px;height:24px;background:#fff;"></div>
<div style="left:1125px;top:640px;width:1px;height:25px;background:#d3dff5;"></div>
<div style="left:1101px;top:642px;width:20px;height:20px;background:#d3dff5;box-sizing:border-box;border:1px solid #c0cfea;"></div>
<div style="left:1107px;top:652px;width:2px;height:2px;background:#111;"></div>
<div style="left:1110px;top:652px;width:2px;height:2px;background:#111;"></div>
<div style="left:1113px;top:652px;width:2px;height:2px;background:#111;"></div>
<div style="left:17px;top:665px;width:312px;height:24px;background:#fff;"></div>
<div style="left:333px;top:665px;width:792px;height:24px;background:#fff;"></div>
<div style="left:1125px;top:665px;width:1px;height:25px;background:#d3dff5;"></div>
<div style="left:1101px;top:667px;width:20px;height:20px;background:#eef2fb;"></div>
<div style="left:1107px;top:677px;width:2px;height:2px;background:#b9bcc4;"></div>
<div style="left:1110px;top:677px;width:2px;height:2px;background:#b9bcc4;"></div>
<div style="left:1113px;top:677px;width:2px;height:2px;background:#b9bcc4;"></div>
<div style="left:17px;top:690px;width:312px;height:24px;background:#fff;"></div>
<div style="left:333px;top:690px;width:792px;height:24px;background:#fff;"></div>
<div style="left:1125px;top:690px;width:1px;height:25px;background:#d3dff5;"></div>
<div style="left:17px;top:715px;width:312px;height:24px;background:#fff;"></div>
<div style="left:333px;top:715px;width:792px;height:24px;background:#fff;"></div>
<div style="left:1125px;top:715px;width:1px;height:25px;background:#d3dff5;"></div>
<div style="left:17px;top:740px;width:312px;height:24px;background:#fff;"></div>
<div style="left:333px;top:740px;width:792px;height:24px;background:#fff;"></div>
<div style="left:1125px;top:740px;width:1px;height:25px;background:#d3dff5;"></div>
<div style="left:17px;top:765px;width:312px;height:22px;background:#fff;"></div>
<div style="left:333px;top:765px;width:793px;height:22px;background:#fff;"></div>
<div style="left:17px;top:788px;width:312px;height:24px;background:#fff;"></div>
<div style="left:333px;top:788px;width:792px;height:24px;background:#fff;"></div>
<div style="left:1125px;top:788px;width:1px;height:25px;background:#d3dff5;"></div>
<div style="left:17px;top:813px;width:312px;height:24px;background:#fff;"></div>
<div style="left:333px;top:813px;width:792px;height:24px;background:#fff;"></div>
<div style="left:1125px;top:813px;width:1px;height:25px;background:#d3dff5;"></div>
<div style="left:1101px;top:815px;width:20px;height:20px;background:#eef2fb;"></div>
<div style="left:1107px;top:825px;width:2px;height:2px;background:#b9bcc4;"></div>
<div style="left:1110px;top:825px;width:2px;height:2px;background:#b9bcc4;"></div>
<div style="left:1113px;top:825px;width:2px;height:2px;background:#b9bcc4;"></div>
<div style="left:329px;top:0px;width:4px;height:900px;background:#c0cfea;"></div>
<div style="left:1126px;top:0px;width:12px;height:900px;background:#fff;"></div>
<div style="left:1125px;top:0px;width:1px;height:1px;background:#d3dff5;"></div>
<div style="left:1126px;top:0px;width:13px;height:1px;background:#d3dff5;"></div>
<div style="left:1138px;top:0px;width:1px;height:900px;background:#d3dff5;"></div>
<div style="left:1129px;top:5px;width:0;height:0;border-left:3px solid transparent;border-right:3px solid transparent;border-bottom:4px solid #000"></div>
<div style="left:1130px;top:13px;width:4px;height:715px;background:#c0cfea;"></div>
<div style="left:1129px;top:813px;width:0;height:0;border-left:3px solid transparent;border-right:3px solid transparent;border-top:4px solid #000"></div>
<svg style="left:17px;top:100px" width="312" height="24" viewBox="0 0 312 24"><rect x="0.6" y="0.6" width="310.8" height="22.9" fill="none" stroke="#000" stroke-width="1.25" stroke-dasharray="2.5 3.5" stroke-dashoffset="1.3"/></svg>
<span class="t" style="left:20.20px;top:3.00px;font-size:12.5px;color:#3d4b6e;letter-spacing:0.327px;">General (Component)</span>
<span class="t" style="left:22.40px;top:28.00px;font-size:12.5px;color:#5b5b5b;letter-spacing:0.419px;">Name</span>
<span class="t" style="left:338.40px;top:28.00px;font-size:12.5px;color:#5b5b5b;letter-spacing:0.043px;">tree_MultiSelectTreeView_MSTV_Select</span>
<span class="t" style="left:22.40px;top:53.00px;font-size:12.5px;color:#5b5b5b;letter-spacing:0.175px;">Workspace</span>
<span class="t" style="left:338.40px;top:53.00px;font-size:12.5px;color:#5b5b5b;letter-spacing:0.375px;">Reporting</span>
<span class="t" style="left:22.40px;top:78.00px;font-size:12.5px;color:#5b5b5b;letter-spacing:0.421px;">Maintenance Unit</span>
<span class="t" style="left:338.40px;top:78.00px;font-size:12.5px;color:#5b5b5b;letter-spacing:0.375px;">Reporting</span>
<span class="t" style="left:22.40px;top:103.00px;font-size:12.5px;color:#000;letter-spacing:0.357px;">Description</span>
<span class="t" style="left:22.40px;top:128.00px;font-size:12.5px;color:#5b5b5b;letter-spacing:0.432px;">Component Type</span>
<span class="t" style="left:338.40px;top:128.00px;font-size:12.5px;color:#5b5b5b;letter-spacing:-0.012px;">Tree View</span>
<span class="t" style="left:20.20px;top:152.00px;font-size:12.5px;color:#3d4b6e;letter-spacing:0.062px;">Processing</span>
<span class="t" style="left:22.40px;top:177.00px;font-size:12.5px;color:#000;letter-spacing:0.085px;">Template Parameter Values (e.g., Param1=Value1, ...)</span>
<span class="t" style="left:22.40px;top:202.00px;font-size:12.5px;color:#000;letter-spacing:-0.132px;">Text 1</span>
<span class="t" style="left:22.40px;top:227.00px;font-size:12.5px;color:#000;letter-spacing:0.008px;">Text 2</span>
<span class="t" style="left:20.20px;top:251.00px;font-size:12.5px;color:#3d4b6e;letter-spacing:0.510px;">Action</span>
<span class="t" style="left:22.40px;top:276.00px;font-size:12.5px;color:#000;letter-spacing:0.223px;">Bound Parameter</span>
<span class="t" style="left:339.20px;top:277.00px;font-size:12.5px;color:#000;letter-spacing:0.338px;">itemSelection</span>
<span class="t" style="left:22.40px;top:301.00px;font-size:12.5px;color:#000;letter-spacing:0.269px;">Apply Selected Value To Current Dashboard</span>
<span class="t" style="left:339.20px;top:302.00px;font-size:12.5px;color:#000;letter-spacing:-0.217px;">True</span>
<span class="t" style="left:20.40px;top:325.00px;font-size:12.5px;color:#3d4b6e;letter-spacing:0.188px;">Save Action</span>
<span class="t" style="left:34.30px;top:349.00px;font-size:12.5px;color:#000;letter-spacing:0.238px;">Selection Changed Save Action</span>
<span class="t" style="left:339.20px;top:350.00px;font-size:12.5px;color:#000;letter-spacing:0.673px;">No Action</span>
<span class="t" style="left:34.30px;top:374.00px;font-size:12.5px;color:#5b5b5b;letter-spacing:0.257px;">Selection Changed Save Arguments</span>
<span class="t" style="left:20.40px;top:398.00px;font-size:12.5px;color:#3d4b6e;letter-spacing:0.285px;">POV Action</span>
<span class="t" style="left:34.30px;top:422.00px;font-size:12.5px;color:#000;letter-spacing:0.262px;">Selection Changed POV Action</span>
<span class="t" style="left:339.20px;top:423.00px;font-size:12.5px;color:#000;letter-spacing:0.673px;">No Action</span>
<span class="t" style="left:34.30px;top:447.00px;font-size:12.5px;color:#5b5b5b;letter-spacing:0.282px;">Selection Changed POV Arguments</span>
<span class="t" style="left:20.40px;top:471.00px;font-size:12.5px;color:#3d4b6e;letter-spacing:-0.117px;">Server Task</span>
<span class="t" style="left:34.30px;top:495.00px;font-size:12.5px;color:#000;letter-spacing:0.119px;">Selection Changed Server Task</span>
<span class="t" style="left:339.20px;top:496.00px;font-size:12.5px;color:#000;letter-spacing:0.163px;">Execute Dashboard Extender Business Rule (Data Management Server)</span>
<span class="t" style="left:34.30px;top:520.00px;font-size:12.5px;color:#000;letter-spacing:0.218px;">Selection Changed Server Task Arguments</span>
<span class="t" style="left:339.20px;top:521.00px;font-size:12.5px;color:#000;letter-spacing:0.071px;">{Workspace.Current.MSTV_Select.MSTV_Select_SolutionHelper}</span>
<span class="t" style="left:708.10px;top:521.00px;font-size:12.5px;color:#000;letter-spacing:0.116px;">{OnTreeItemSelect}</span>
<span class="t" style="left:819.80px;top:521.00px;font-size:12.5px;color:#000;letter-spacing:0.384px;width:275.2px;overflow:hidden;">{ItemSelection=[|!itemSelection!|],DimName=[|</span>
<span class="t" style="left:20.40px;top:544.00px;font-size:12.5px;color:#3d4b6e;letter-spacing:0.298px;">User Interface Action</span>
<span class="t" style="left:34.30px;top:568.00px;font-size:12.5px;color:#000;letter-spacing:0.288px;">Selection Changed User Interface Action</span>
<span class="t" style="left:339.20px;top:569.00px;font-size:12.5px;color:#000;letter-spacing:-0.130px;">Refresh</span>
<span class="t" style="left:34.30px;top:593.00px;font-size:12.5px;color:#000;letter-spacing:0.184px;">Dashboards To Redraw</span>
<span class="t" style="left:339.20px;top:594.00px;font-size:12.5px;color:#000;letter-spacing:0.013px;">99_MultiSelectTreeView_MSTV_Select</span>
<span class="t" style="left:34.30px;top:618.00px;font-size:12.5px;color:#000;letter-spacing:0.230px;">Dashboards To Show</span>
<span class="t" style="left:34.30px;top:643.00px;font-size:12.5px;color:#000;letter-spacing:0.275px;">Dashboards To Hide</span>
<span class="t" style="left:34.30px;top:668.00px;font-size:12.5px;color:#5b5b5b;letter-spacing:0.344px;">Dashboard To Open In Dialog</span>
<span class="t" style="left:34.30px;top:693.00px;font-size:12.5px;color:#5b5b5b;letter-spacing:0.234px;">Dialog Initial Parameter Values</span>
<span class="t" style="left:34.30px;top:718.00px;font-size:12.5px;color:#5b5b5b;letter-spacing:0.394px;">Dialog Input Parameter Map</span>
<span class="t" style="left:34.30px;top:743.00px;font-size:12.5px;color:#5b5b5b;letter-spacing:0.409px;">Dialog Output Parameter Map</span>
<span class="t" style="left:20.40px;top:767.00px;font-size:12.5px;color:#3d4b6e;letter-spacing:0.532px;">Navigation Action</span>
<span class="t" style="left:34.30px;top:791.00px;font-size:12.5px;color:#000;letter-spacing:0.379px;">Selection Changed Navigation Action</span>
<span class="t" style="left:339.20px;top:792.00px;font-size:12.5px;color:#000;letter-spacing:0.673px;">No Action</span>
<span class="t" style="left:34.30px;top:815.00px;font-size:12.5px;color:#5b5b5b;letter-spacing:0.386px;">Selection Changed Navigation Arguments</span>
<div style="left:0;top:821px;width:1139px;height:1px;background:#d3dff5"></div>
</div>
</body></html>
